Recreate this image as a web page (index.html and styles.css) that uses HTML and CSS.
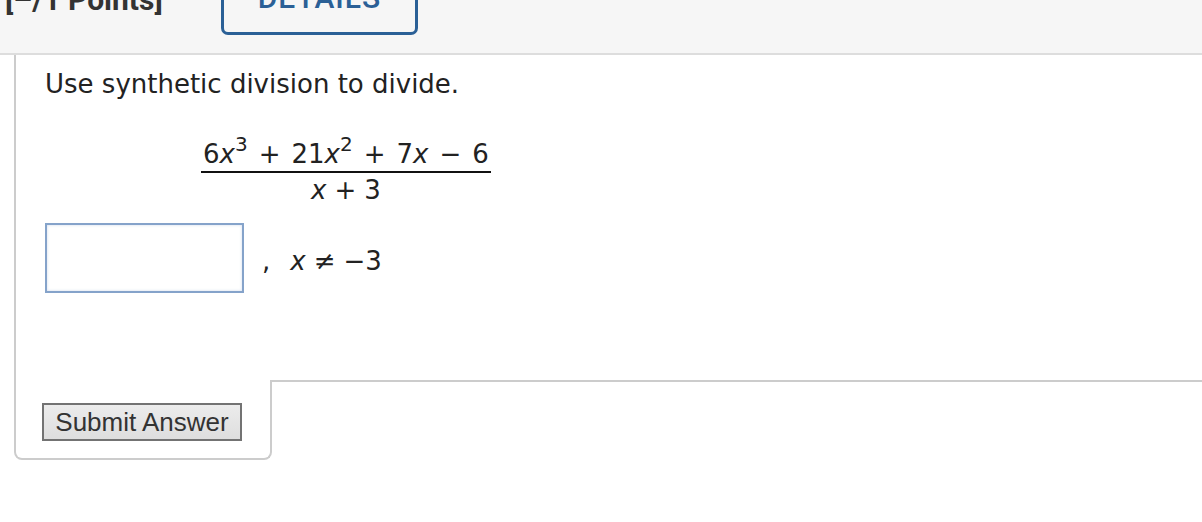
FILE: index.html
```html
<!DOCTYPE html>
<html>
<head>
<meta charset="utf-8">
<link rel="stylesheet" href="styles.css">
</head>
<body>
<div class="header">
  <div class="header-inner">
    <div class="points">[–/1 Points]</div>
    <div class="details-btn">DETAILS</div>
  </div>
</div>
<div class="question">
  <p class="prompt">Use synthetic division to divide.</p>
  <div class="fraction">
    <div class="num">6<i>x</i><sup>3</sup><span class="op">+</span>21<i>x</i><sup>2</sup><span class="op">+</span>7<i>x</i><span class="op">−</span>6</div>
    <div class="den"><i>x</i><span class="op">+</span>3</div>
  </div>
  <div class="answer-row">
    <input class="answer" type="text">
    <span class="cond">,<span class="gap"></span><i>x</i><span class="op">≠</span>−3</span>
  </div>
</div>
<div class="footer">
  <div class="submit-cell">
    <button class="submit">Submit Answer</button>
  </div>
  <div class="footer-rest"></div>
</div>
</body>
</html>
```
FILE: styles.css
```css
html, body {
  margin: 0;
  padding: 0;
  background: #fff;
}
body {
  width: 1202px;
  height: 522px;
  overflow: hidden;
  font-family: "DejaVu Sans", Verdana, sans-serif;
  color: #222;
}
.header {
  height: 53px;
  background: #f6f6f6;
  border-bottom: 2px solid #dddddd;
  overflow: hidden;
  display: flex;
  align-items: flex-end;
}
.header-inner {
  display: flex;
  align-items: flex-end;
  padding: 0 0 18px 5px;
}
.points {
  font-family: Roboto, "Liberation Sans", sans-serif;
  font-weight: 700;
  font-size: 30px;
  line-height: 30px;
  color: #333;
  margin-bottom: 20px;
  width: 216px;
}
.details-btn {
  box-sizing: border-box;
  width: 197px;
  height: 60px;
  padding-top: 5px;
  border: 3px solid #2b6096;
  border-radius: 7px;
  color: #2b6096;
  font-family: Roboto, "Liberation Sans", sans-serif;
  font-weight: 500;
  font-size: 30px;
  letter-spacing: 1px;
  text-align: center;
  line-height: 30px;
}
.question {
  height: 325px;
  border-left: 2px solid #cccccc;
  margin-left: 14px;
  padding-left: 29px;
  padding-top: 14px;
  box-sizing: border-box;
  font-size: 26px;
}
.prompt {
  margin: 0;
  line-height: 30px;
}
.fraction {
  display: inline-flex;
  flex-direction: column;
  align-items: center;
  margin-left: 156px;
  margin-top: 40px;
  line-height: 30px;
}
.op {
  margin: 0 11px;
}
.den .op {
  margin: 0 8px;
}
.num {
  padding: 0 2px 2px;
  border-bottom: 2px solid #111;
}
.num sup {
  font-size: 20px;
  line-height: 0;
  vertical-align: 12px;
}
.den {
  padding-top: 2px;
}
i {
  font-style: italic;
}
.answer-row {
  display: flex;
  align-items: center;
  margin-top: 18px;
}
.answer {
  box-sizing: border-box;
  width: 199px;
  height: 70px;
  margin: 0;
  border: 2px solid #85a3ca;
  box-shadow: inset 0 0 3px rgba(120, 150, 200, 0.35);
  background: #fff;
  outline: none;
}
.cond {
  margin-left: 18px;
  padding-top: 6px;
}
.cond .op {
  margin: 0 8px;
}
.gap {
  display: inline-block;
  width: 20px;
}
.footer {
  display: flex;
  height: 80px;
}
.submit-cell {
  box-sizing: border-box;
  width: 258px;
  margin-left: 14px;
  border-left: 2px solid #cccccc;
  border-right: 2px solid #cccccc;
  border-bottom: 2px solid #cccccc;
  border-radius: 0 0 8px 8px;
  padding: 23px 0 0 26px;
}
.footer-rest {
  flex: 1;
  border-top: 2px solid #cccccc;
}
.submit {
  box-sizing: border-box;
  width: 200px;
  height: 38px;
  margin: 0;
  padding: 0;
  border: 2px solid #737373;
  border-radius: 0;
  background: linear-gradient(#ececec, #dedede);
  font-family: "Liberation Sans", Arial, sans-serif;
  font-size: 26px;
  color: #333;
  line-height: 34px;
}
```
